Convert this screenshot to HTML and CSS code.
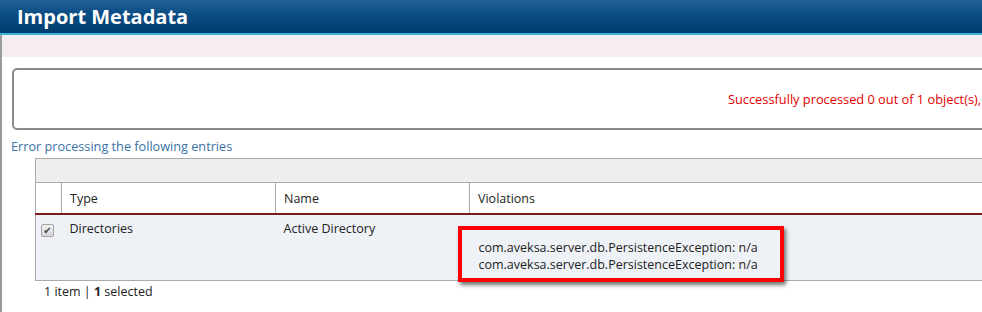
FILE: index.html
```html
<!DOCTYPE html>
<html lang="en">
<head>
    <meta charset="UTF-8">
    <title>Import Metadata</title>
    <link rel="stylesheet" href="styles.css">
</head>
<body>

    <div class="title-bar">
        <h1>Import Metadata</h1>
    </div>

    <div class="page">
        <div class="band"></div>

        <div class="message-box">
            <span class="message">Successfully processed 0 out of 1 object(s),</span>
        </div>

        <div class="error-label">Error processing the following entries</div>

        <div class="grid-wrap">
            <div class="grid-toolbar"></div>
            <table class="grid">
                <thead>
                    <tr>
                        <th class="col-check"></th>
                        <th class="col-type">Type</th>
                        <th class="col-name">Name</th>
                        <th class="col-viol">Violations</th>
                    </tr>
                </thead>
                <tbody>
                    <tr class="selected">
                        <td class="col-check"><span class="checkbox">&#10004;</span></td>
                        <td>Directories</td>
                        <td>Active Directory</td>
                        <td class="violations">
                            com.aveksa.server.db.PersistenceException: n/a<br>
                            com.aveksa.server.db.PersistenceException: n/a
                        </td>
                    </tr>
                </tbody>
            </table>
            <!-- annotation drawn over the grid -->
            <div class="highlight"></div>
        </div>

        <div class="grid-footer">1 item | <b>1</b> selected</div>
    </div>

</body>
</html>
```

FILE: styles.css
```css
html, body {
    margin: 0;
    height: 100%;
}

body {
    font-family: 'Open Sans', 'DejaVu Sans', sans-serif;
    font-size: 12px;
    color: #222;
    background-color: #fff;
    overflow: hidden;
    width: 982px;
}

.title-bar {
    height: 33px;
    background: linear-gradient(#215f98, #0a4c82 45%, #003d6d);
    border-bottom: 2px solid #3ab4d6;
}

.title-bar h1 {
    margin: 0;
    padding-left: 17px;
    font-size: 20px;
    line-height: 33px;
    font-weight: bold;
    color: #fff;
}

/* the panel runs on past the right edge of the window */
.page {
    border-left: 2px solid #9a9a9a;
    height: 277px;
    overflow: hidden;
}

.band {
    height: 22px;
    background-color: #f6eeee;
}

.message-box {
    margin: 11px -20px 0 10px;
    height: 58px;
    border: 2px solid #8a8a8a;
    border-radius: 5px;
    display: flex;
    align-items: center;
    padding-left: 714px;
}

.message {
    color: #e30000;
    font-size: 12.8px;
    white-space: nowrap;
}

.error-label {
    margin: 8px 0 0 9px;
    color: #3a72a6;
    font-size: 12.7px;
    line-height: 16px;
}

.grid-wrap {
    position: relative;
    margin: 4px -20px 0 33px;
}

.grid-toolbar {
    height: 23px;
    background-color: #eeeeee;
    border: 1px solid #aaa;
    border-right: none;
}

.grid {
    border-collapse: collapse;
    width: 100%;
    border-left: 1px solid #aaa;
}

.grid th {
    height: 30px;
    padding: 0 8px;
    text-align: left;
    font-weight: normal;
    font-size: 12.5px;
    border-left: 1px solid #aaa;
    border-bottom: 2px solid #7b1c1c;
}

.grid th:first-child {
    border-left: none;
}

.grid .col-check { width: 25px; padding: 0; }
.grid .col-type { width: 197px; }
.grid .col-name { width: 177px; }

.grid td {
    height: 66px;
    padding: 6px 8px 0;
    vertical-align: top;
    font-size: 12.5px;
    line-height: 16px;
    box-sizing: border-box;
}

.grid tr.selected td {
    background-color: #eef1f6;
    border-bottom: 1px solid #aaa;
}

.grid td.col-check {
    padding: 7px 0 0 5px;
}

.checkbox {
    display: inline-block;
    width: 11px;
    height: 11px;
    border: 1px solid #a4a4a4;
    border-radius: 2px;
    background: linear-gradient(#f4f4f4, #d4d4d4);
    color: #444;
    font-size: 10px;
    line-height: 11px;
    text-align: center;
}

.grid td.violations {
    padding: 24px 8px 0 9px;
    line-height: 17px;
}

.highlight {
    position: absolute;
    left: 423px;
    top: 68px;
    width: 318px;
    height: 48px;
    border: 4px solid #ff0000;
    box-shadow: 2px 3px 4px rgba(0, 0, 0, 0.55);
}

.grid-footer {
    margin: 3px 0 0 42px;
    font-size: 12.5px;
    line-height: 16px;
}
```
